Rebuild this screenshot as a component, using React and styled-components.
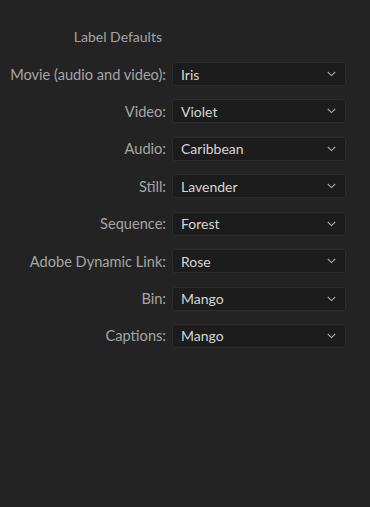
import React from "react";
import styled, { createGlobalStyle } from "styled-components";

const Global = createGlobalStyle`
  html, body { margin: 0; padding: 0; background: #232323; }
  body { font-family: Lato, "Noto Sans", sans-serif; }
`;

const Panel = styled.div`
  width: 370px;
  height: 507px;
  background: #232323;
  box-sizing: border-box;
  padding-top: 27px;
`;

const Title = styled.div`
  width: 162px;
  text-align: right;
  color: #a3a3a3;
  font-size: 14px;
  line-height: 20px;
  margin-bottom: 15px;
`;

const Rows = styled.div`
  display: flex;
  flex-direction: column;
  gap: 13.43px;
`;

const Row = styled.div`
  display: grid;
  grid-template-columns: 166px 174px;
  column-gap: 6px;
  align-items: center;
`;

const Label = styled.div`
  text-align: right;
  color: #a5a5a5;
  font-size: 14.6px;
  white-space: nowrap;
`;

const Select = styled.div`
  height: 24px;
  box-sizing: border-box;
  background: #1c1c1c;
  border: 1px solid #2c2c2c;
  border-radius: 3px;
  display: flex;
  align-items: center;
  justify-content: space-between;
  padding: 0 9px 0 8px;
  color: #d6d6d6;
  font-size: 14px;
`;

const Chevron = () => (
  <svg width="9" height="6" viewBox="0 0 9 6">
    <path d="M0.8 1 L4.5 4.6 L8.2 1" fill="none" stroke="#a8a8a8" strokeWidth="1.1" />
  </svg>
);

const rows = [
  ["Movie (audio and video):", "Iris"],
  ["Video:", "Violet"],
  ["Audio:", "Caribbean"],
  ["Still:", "Lavender"],
  ["Sequence:", "Forest"],
  ["Adobe Dynamic Link:", "Rose"],
  ["Bin:", "Mango"],
  ["Captions:", "Mango"],
];

export default function App() {
  return (
    <>
      <Global />
      <Panel>
        <Title>Label Defaults</Title>
        <Rows>
          {rows.map(([l, v]) => (
            <Row key={l}>
              <Label>{l}</Label>
              <Select>
                <span>{v}</span>
                <Chevron />
              </Select>
            </Row>
          ))}
        </Rows>
      </Panel>
    </>
  );
}
